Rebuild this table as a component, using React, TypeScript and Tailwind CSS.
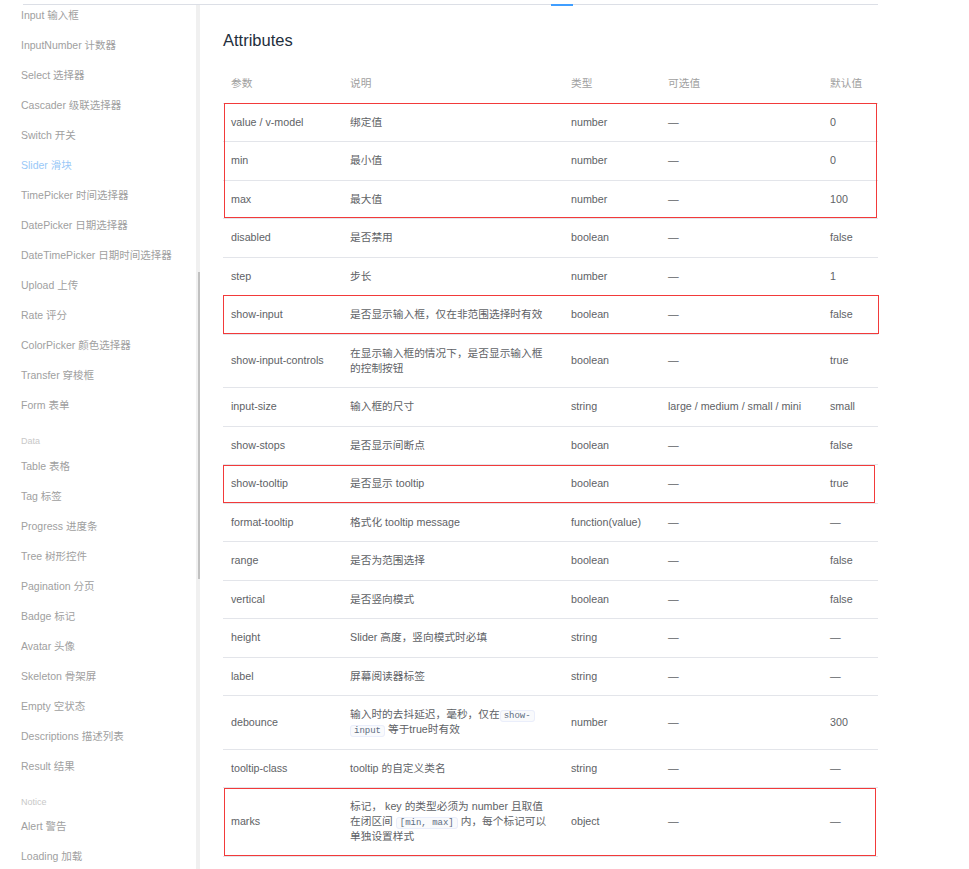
import React from 'react';

type NavItem = { label: string; group?: boolean; active?: boolean };

const NAV: NavItem[] = [
  { label: 'Input 输入框' },
  { label: 'InputNumber 计数器' },
  { label: 'Select 选择器' },
  { label: 'Cascader 级联选择器' },
  { label: 'Switch 开关' },
  { label: 'Slider 滑块', active: true },
  { label: 'TimePicker 时间选择器' },
  { label: 'DatePicker 日期选择器' },
  { label: 'DateTimePicker 日期时间选择器' },
  { label: 'Upload 上传' },
  { label: 'Rate 评分' },
  { label: 'ColorPicker 颜色选择器' },
  { label: 'Transfer 穿梭框' },
  { label: 'Form 表单' },
  { label: 'Data', group: true },
  { label: 'Table 表格' },
  { label: 'Tag 标签' },
  { label: 'Progress 进度条' },
  { label: 'Tree 树形控件' },
  { label: 'Pagination 分页' },
  { label: 'Badge 标记' },
  { label: 'Avatar 头像' },
  { label: 'Skeleton 骨架屏' },
  { label: 'Empty 空状态' },
  { label: 'Descriptions 描述列表' },
  { label: 'Result 结果' },
  { label: 'Notice', group: true },
  { label: 'Alert 警告' },
  { label: 'Loading 加载' },
];

function Code({ children }: { children: React.ReactNode }) {
  return (
    <code className="font-['Liberation_Mono',monospace] text-[9px] leading-none text-[#5e6d82] bg-[#f9fafc] border border-[#eaeefb] rounded-[3px] px-[3px]">
      {children}
    </code>
  );
}

type Row = { name: string; desc: React.ReactNode; type: string; options: string; def: string };

const ROWS: Row[] = [
  { name: 'value / v-model', desc: '绑定值', type: 'number', options: '—', def: '0' },
  { name: 'min', desc: '最小值', type: 'number', options: '—', def: '0' },
  { name: 'max', desc: '最大值', type: 'number', options: '—', def: '100' },
  { name: 'disabled', desc: '是否禁用', type: 'boolean', options: '—', def: 'false' },
  { name: 'step', desc: '步长', type: 'number', options: '—', def: '1' },
  { name: 'show-input', desc: '是否显示输入框，仅在非范围选择时有效', type: 'boolean', options: '—', def: 'false' },
  {
    name: 'show-input-controls',
    desc: (
      <>
        在显示输入框的情况下，是否显示输入框
        <br />
        的控制按钮
      </>
    ),
    type: 'boolean',
    options: '—',
    def: 'true',
  },
  { name: 'input-size', desc: '输入框的尺寸', type: 'string', options: 'large / medium / small / mini', def: 'small' },
  { name: 'show-stops', desc: '是否显示间断点', type: 'boolean', options: '—', def: 'false' },
  { name: 'show-tooltip', desc: '是否显示 tooltip', type: 'boolean', options: '—', def: 'true' },
  { name: 'format-tooltip', desc: '格式化 tooltip message', type: 'function(value)', options: '—', def: '—' },
  { name: 'range', desc: '是否为范围选择', type: 'boolean', options: '—', def: 'false' },
  { name: 'vertical', desc: '是否竖向模式', type: 'boolean', options: '—', def: 'false' },
  { name: 'height', desc: 'Slider 高度，竖向模式时必填', type: 'string', options: '—', def: '—' },
  { name: 'label', desc: '屏幕阅读器标签', type: 'string', options: '—', def: '—' },
  {
    name: 'debounce',
    desc: (
      <>
        输入时的去抖延迟，毫秒，仅在<Code>show-</Code>
        <br />
        <Code>input</Code> 等于true时有效
      </>
    ),
    type: 'number',
    options: '—',
    def: '300',
  },
  { name: 'tooltip-class', desc: 'tooltip 的自定义类名', type: 'string', options: '—', def: '—' },
  {
    name: 'marks',
    desc: (
      <>
        标记， key 的类型必须为 number 且取值
        <br />
        在闭区间 <Code>[min, max]</Code> 内，每个标记可以
        <br />
        单独设置样式
      </>
    ),
    type: 'object',
    options: '—',
    def: '—',
  },
];

const HEADERS = ['参数', '说明', '类型', '可选值', '默认值'];

export default function App() {
  return (
    <div className="relative w-[969px] h-[869px] overflow-hidden bg-white font-['Liberation_Sans','Noto_Sans_CJK_SC',sans-serif]">
      {/* top tab line */}
      <div className="h-[5px] flex items-end pl-[23px]">
        <div className="w-[855px] h-px bg-[#dcdfe6] flex">
          <div className="ml-[528px] w-[22px] h-[1.5px] bg-[#409eff]" />
        </div>
      </div>

      <div className="flex h-[864px]">
        {/* sidebar */}
        <div className="w-[196px] overflow-hidden">
          <ul className="-mt-[4px]">
            {NAV.map((item) =>
              item.group ? (
                <li
                  key={item.label}
                  className={`pl-[21px] pt-[15px] text-[9px] leading-[10px] text-[#c8c8c8] ${
                    item.label === 'Data' ? 'pb-[6px]' : 'pb-[5px]'
                  }`}
                >
                  {item.label}
                </li>
              ) : (
                <li
                  key={item.label}
                  className={`h-[30px] flex items-center pl-[21px] text-[10.5px] ${
                    item.active ? 'text-[#99c8f7]' : 'text-[#a0a0a0]'
                  }`}
                >
                  {item.label}
                </li>
              )
            )}
          </ul>
        </div>
        <div className="w-[4px] bg-[#f0f0f0] pt-[267px] flex flex-col items-end">
          <div className="w-[2.5px] h-[307px] bg-[#c1c1c1]" />
        </div>

        {/* main */}
        <div className="flex-1 pl-[23px]">
          <h3 className="mt-[25px] text-[16.5px] leading-[20px] text-[#1f2f3d] font-normal">Attributes</h3>
          <table className="mt-[15px] w-[655px] table-fixed border-collapse text-[10.7px] leading-[15px]">
            <colgroup>
              <col className="w-[119px]" />
              <col className="w-[221px]" />
              <col className="w-[97px]" />
              <col className="w-[162px]" />
              <col className="w-[56px]" />
            </colgroup>
            <thead>
              <tr className="border-b border-[#dfe2e8]">
                {HEADERS.map((h) => (
                  <th key={h} className="pl-[8px] py-[11.25px] text-left font-normal text-[#a0a0a0]">
                    {h}
                  </th>
                ))}
              </tr>
            </thead>
            <tbody>
              {ROWS.map((r) => (
                <tr key={r.name} className="border-b border-[#e3e5ea] text-[#606266]">
                  <td className="pl-[8px] py-[11.25px] align-middle whitespace-nowrap">{r.name}</td>
                  <td className="pl-[8px] py-[11.25px] align-middle whitespace-nowrap">{r.desc}</td>
                  <td className="pl-[8px] py-[11.25px] align-middle whitespace-nowrap">{r.type}</td>
                  <td className="pl-[8px] py-[11.25px] align-middle whitespace-nowrap">{r.options}</td>
                  <td className="pl-[8px] py-[11.25px] align-middle whitespace-nowrap">{r.def}</td>
                </tr>
              ))}
            </tbody>
          </table>
        </div>
      </div>

      {/* red annotation boxes */}
      <div className="absolute left-[224px] top-[103px] w-[653px] h-[115px] border border-[#f23a3a]" />
      <div className="absolute left-[223px] top-[295px] w-[656px] h-[39px] border border-[#f23a3a]" />
      <div className="absolute left-[223px] top-[465px] w-[652px] h-[38px] border border-[#f23a3a]" />
      <div className="absolute left-[224px] top-[788px] w-[652px] h-[68px] border border-[#f23a3a]" />
    </div>
  );
}
